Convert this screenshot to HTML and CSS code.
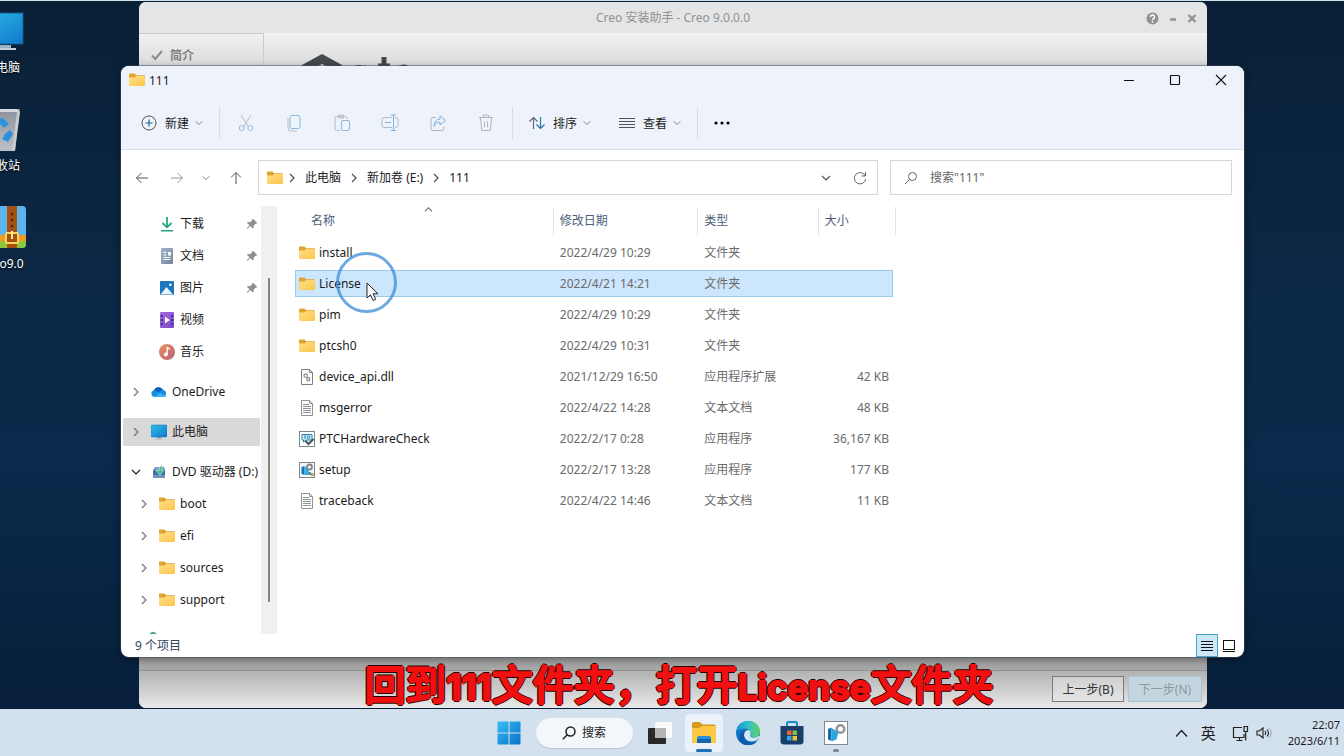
FILE: index.html
```html
<!DOCTYPE html>
<html lang="zh-CN">
<head>
<meta charset="utf-8">
<title>111</title>
<link rel="stylesheet" href="styles.css">
</head>
<body>
<svg class="defs" aria-hidden="true">
  <defs>
    <linearGradient id="gFolder" x1="0" y1="0" x2="1" y2="1"><stop offset="0" stop-color="#ffe08a"/><stop offset="1" stop-color="#fbc64a"/></linearGradient>
    <linearGradient id="gScreen" x1="0" y1="0" x2="1" y2="1"><stop offset="0" stop-color="#2cc0e8"/><stop offset="1" stop-color="#1277cc"/></linearGradient>
    <linearGradient id="gBlue" x1="0" y1="0" x2="1" y2="1"><stop offset="0" stop-color="#35bdf2"/><stop offset="1" stop-color="#0a72c8"/></linearGradient>
    <linearGradient id="gViolet" x1="0" y1="0" x2="1" y2="1"><stop offset="0" stop-color="#a06be0"/><stop offset="1" stop-color="#7a48c4"/></linearGradient>
    <linearGradient id="gMusic" x1="0" y1="0" x2="1" y2="1"><stop offset="0" stop-color="#e8925a"/><stop offset="1" stop-color="#b8607c"/></linearGradient>
    <linearGradient id="gDoc" x1="0" y1="0" x2="1" y2="1"><stop offset="0" stop-color="#a3b4c8"/><stop offset="1" stop-color="#71859e"/></linearGradient>
    <linearGradient id="gEdgeA" x1="0" y1="0" x2="1" y2="0"><stop offset="0" stop-color="#1c8fd6"/><stop offset=".5" stop-color="#2fc2c8"/><stop offset="1" stop-color="#63d060"/></linearGradient>
    <linearGradient id="gBin" x1="0" y1="0" x2="0" y2="1"><stop offset="0" stop-color="#8b929c"/><stop offset="1" stop-color="#bcc0c6"/></linearGradient>
  </defs>
  <symbol id="i-folder" viewBox="0 0 16 16"><path d="M0 2.500a1 1 0 0 1 1-1h4.500l1.800 1.800H15a1 1 0 0 1 1 1V8H0z" fill="#dfa52c"/><path d="M0 5.500h5.500L7.300 4H15a1 1 0 0 1 1 1V13a1 1 0 0 1-1 1H1a1 1 0 0 1-1-1z" fill="url(#gFolder)"/></symbol>
  <symbol id="i-right" viewBox="0 0 10 10"><path d="M3 1l4 4-4 4" fill="none" stroke="currentColor" stroke-width="1.300"/></symbol>
  <symbol id="i-down" viewBox="0 0 10 10"><path d="M1 3l4 4 4-4" fill="none" stroke="currentColor" stroke-width="1.200"/></symbol>
  <symbol id="i-up" viewBox="0 0 10 10"><path d="M1 7l4-4 4 4" fill="none" stroke="currentColor" stroke-width="1.200"/></symbol>
  <symbol id="i-pin" viewBox="0 0 12 12"><path d="M7 .8L11.200 5l-.9.8-.8-.1-1.900 2 .1 2-.9.9-2.500-2.500L1.200 11l-.6-.5 2.900-3.200L1 4.900l.9-.9 2.200.2L6.200 2.300l-.1-.7z" fill="#8b8f94"/></symbol>
  <symbol id="i-download" viewBox="0 0 16 16"><path d="M8 1v10M3.500 7L8 11.300 12.500 7" fill="none" stroke="#26a488" stroke-width="1.800"/><path d="M2 14.700h12" stroke="#26a488" stroke-width="1.600"/></symbol>
  <symbol id="i-doc" viewBox="0 0 16 16"><rect x="2" y="0" width="12" height="16" rx="1" fill="url(#gDoc)"/><path d="M4.500 4.500h3M4.500 7h3M4.500 9.500h7M4.500 11.500h7" stroke="#fff"/><path d="M9 4h3v3.500H9z" fill="#fff"/></symbol>
  <symbol id="i-picture" viewBox="0 0 16 16"><rect x="1" y="1" width="14" height="14" rx="1" fill="#1c76bd"/><path d="M1.500 14.500L7.500 7l6.500 7.500z" fill="#e9f4fc"/><circle cx="11.300" cy="4.700" r="1.300" fill="#fff"/></symbol>
  <symbol id="i-video" viewBox="0 0 16 16"><rect x="1" y="0" width="14" height="16" rx="1" fill="url(#gViolet)"/><path d="M2 3h2v2H2zM2 7h2v2H2zM2 11h2v2H2zM12 3h2v2h-2zM12 7h2v2h-2zM12 11h2v2h-2z" fill="#4d2a8c"/><path d="M6 4.800L11 8l-5 3.200z" fill="#fff"/></symbol>
  <symbol id="i-music" viewBox="0 0 16 16"><circle cx="8" cy="8" r="8" fill="url(#gMusic)"/><circle cx="6.800" cy="10.500" r="1.900" fill="#fff"/><path d="M8.200 10.500V3.500l2.600 1.800" fill="none" stroke="#fff" stroke-width="1.300"/></symbol>
  <symbol id="i-cloud" viewBox="0 0 16 16"><path d="M3.500 13A3.400 3.400 0 0 1 3 6.300 5 5 0 0 1 12 6a3.600 3.600 0 0 1 .6 7z" fill="#1490df"/><path d="M3 6.300A5 5 0 0 1 12 6c-2 0-3 1-4 2z" fill="#0a5eb5"/><path d="M3.500 13L9 9l6.200 3.200A3.400 3.400 0 0 1 12.600 13z" fill="#39b4f4"/></symbol>
  <symbol id="i-pc" viewBox="0 0 16 16"><path d="M6 12h4v2.500H6z" fill="#8fa3b3"/><path d="M4.500 14.500h7v1h-7z" fill="#a9bac7"/><rect x="0" y="1" width="16" height="12" rx="1" fill="url(#gScreen)" stroke="#1d6fa8" stroke-width=".5"/></symbol>
  <symbol id="i-dvd" viewBox="0 0 16 16"><path d="M2 6l2-3h9l1 3v8H2z" fill="#7b9cc4"/><path d="M2 6h12v8H2z" fill="#3f74ac"/><path d="M2 11h12v3H2z" fill="#7394b6"/><path d="M12 1c-3 .5-4 2.500-4 5.500H5L9 11l3.500-4.500H10.500C10.500 4 11 2.500 12 1z" fill="#3bc37b" stroke="#fff" stroke-width=".5"/></symbol>
  <symbol id="i-dll" viewBox="0 0 16 16"><path d="M2.500.5h8l3 3v12h-11z" fill="#fff" stroke="#7c7c7c"/><path d="M10.500.5v3h3" fill="none" stroke="#7c7c7c"/><circle cx="6.700" cy="6.700" r="1.700" fill="none" stroke="#999" stroke-width="1.400"/><circle cx="9.300" cy="10.200" r="1.500" fill="none" stroke="#888" stroke-width="1.300"/></symbol>
  <symbol id="i-text" viewBox="0 0 16 16"><path d="M2.500.5h8l3 3v12h-11z" fill="#fff" stroke="#939393"/><path d="M10.500.5v3h3M4 4.500h6M4 6.500h8M4 8.500h8M4 10.500h8M4 12.500h8" fill="none" stroke="#939393"/></symbol>
  <symbol id="i-check" viewBox="0 0 16 16"><rect x=".5" y=".5" width="15" height="15" fill="#fff" stroke="#7d8589"/><path d="M3 3.500h10v5.500H7L4.500 11V9H3z" fill="#d4effa" stroke="#2681a8"/><path d="M5 5h2M5 7h2" stroke="#2681a8"/><circle cx="9.500" cy="6.200" r="1.300" fill="none" stroke="#2681a8"/><path d="M6.500 10l3 3L14.500 8" fill="none" stroke="#41545e" stroke-width="2"/></symbol>
  <symbol id="i-setup" viewBox="0 0 16 16"><rect x=".5" y=".5" width="15" height="15" fill="#f6f9fa" stroke="#7d8589"/><path d="M2.500 5l3-1v9l-3-1z" fill="#1474b8"/><path d="M5.500 4l4.500 4-1 5H5.500z" fill="#31aee2"/><circle cx="10.500" cy="5" r="2.500" fill="#fff" stroke="#80878c" stroke-width="1.800"/><path d="M9 10h3v3H9z" fill="#5f8fae"/><path d="M12 11h2.500v3H12z" fill="#a9a544"/></symbol>
  <symbol id="i-task-setup" viewBox="0 0 24 24"><rect x=".5" y=".5" width="23" height="23" fill="#fff" stroke="#84898d"/><path d="M4 8l3.500-1.500V20L4 18.500z" fill="#0f6fb4"/><path d="M7.500 7l7 4-2 7.500-5 2z" fill="#2ea4dc"/><circle cx="16.500" cy="8" r="3.800" fill="#fff" stroke="#90969b" stroke-width="2.600"/></symbol>
</svg>

<main class="stage">
  <ul class="shortcuts">
    <li><svg class="big" viewBox="0 0 44 44"><path d="M13 36h18v3H13z" fill="#9bb0bd"/><path d="M8 39h28v2H8z" fill="#c3ced5"/><rect x="-10" y="4" width="53" height="31" fill="url(#gScreen)" stroke="#0e588c"/></svg><span>此电脑</span></li>
    <li><svg class="big" viewBox="0 0 44 44"><path d="M4 2h36l-5 42H9z" fill="url(#gBin)"/><path d="M4 2h33l3 3H4z" fill="#d5d8dc"/><path d="M37 5h3l-5 38-3 1z" fill="#c9ccd1"/><path d="M16 13l7-2 6 6-5 4-4-4-4 4zM30 23l3 4-5 8-6-3 3-5zM12 24l6 1-1 8-6-4z" fill="#2d92de"/></svg><span>回收站</span></li>
    <li><svg class="big archive" viewBox="0 0 48 44"><rect x="0" y="1" width="48" height="42" rx="4" fill="#5bb5f0"/><path d="M0 30h48v7H0z" fill="#f59a23"/><path d="M0 36h48v3a4 4 0 0 1-4 4H4z" fill="#8cc63f"/><rect x="29" y="1" width="10" height="42" fill="#a4500f"/><circle cx="34" cy="9" r="1.500" fill="#5e2b08"/><circle cx="34" cy="15" r="1.500" fill="#5e2b08"/><circle cx="34" cy="21" r="1.500" fill="#5e2b08"/><rect x="28" y="28" width="12" height="10" rx="1" fill="#a4500f" stroke="#ffd35c" stroke-width="2"/><path d="M34 26v8" stroke="#ffe9a0" stroke-width="2"/></svg><span>Creo9.0</span></li>
  </ul>

  <section class="installer">
    <header class="installer-bar">
      <h2>Creo 安装助手 - Creo 9.0.0.0</h2>
      <div class="installer-controls">
        <button aria-label="帮助"><svg width="13" height="13" viewBox="0 0 13 13"><circle cx="6.500" cy="6.500" r="6" fill="#929292"/><path d="M4.500 5a2 2 0 1 1 2.800 1.800q-.8.400-.8 1.400M6.500 9v1.600" fill="none" stroke="#fff" stroke-width="1.500"/></svg></button>
        <button aria-label="最小化"><svg width="8" height="13" viewBox="0 0 8 13"><path d="M1 7.500h6" stroke="#929292" stroke-width="2.400"/></svg></button>
        <button aria-label="关闭"><svg width="10" height="13" viewBox="0 0 10 13"><path d="M1.500 3l7 7M8.500 3l-7 7" stroke="#929292" stroke-width="2.400"/></svg></button>
      </div>
    </header>
    <div class="installer-body">
      <nav class="steps"><svg width="12" height="12" viewBox="0 0 12 12"><path d="M1 5.500L4.200 9 11 1" fill="none" stroke="#8a8a8a" stroke-width="2"/></svg><span>简介</span></nav>
      <div class="brand"><svg width="116" height="40" viewBox="0 0 116 40"><path d="M20 0l20 11v24L20 40 0 35V11z" fill="#45494c"/><path d="M20 10l9 5v12l-9 5-9-5V15z" fill="#e6e7e8"/><path d="M57 30V11M57 17a6 6 0 1 1 0 6" fill="none" stroke="#45494c" stroke-width="5"/><path d="M82 3v22q0 5 7 5M76 12h12M107 15a8 8 0 1 0 0 12" fill="none" stroke="#45494c" stroke-width="5"/></svg></div>
    </div>
    <footer class="installer-footer">
      <button class="step-button">上一步(B)</button>
      <button class="step-button primary" disabled>下一步(N)</button>
    </footer>
  </section>

  <section class="explorer">
    <header class="chrome">
      <div class="titlebar">
        <svg class="icon"><use href="#i-folder"/></svg><h1>111</h1>
        <div class="window-controls">
          <button aria-label="最小化"><svg width="12" height="12" viewBox="0 0 12 12"><path d="M1 6.500h10" stroke="#111"/></svg></button>
          <button aria-label="最大化"><svg width="12" height="12" viewBox="0 0 12 12"><rect x="1.500" y="1.500" width="9" height="9" rx="1" fill="none" stroke="#111" stroke-width="1.200"/></svg></button>
          <button aria-label="关闭"><svg width="12" height="12" viewBox="0 0 12 12"><path d="M1 1l10 10M11 1L1 11" stroke="#111" stroke-width="1.100"/></svg></button>
        </div>
      </div>
      <div class="commands">
        <button class="command new"><svg class="icon" viewBox="0 0 16 16"><circle cx="8" cy="8" r="7" fill="none" stroke="#4d4d4d"/><path d="M8 4.500v7M4.500 8h7" stroke="#1b6b94" stroke-width="1.200"/></svg><span>新建</span><svg class="tiny"><use href="#i-down"/></svg></button>
        <div class="tools">
          <button aria-label="剪切"><svg class="tool" viewBox="0 0 18 18"><path d="M4 1l7.500 12M14 1L6.500 13" stroke="#b6bcc3"/><circle cx="4.700" cy="14" r="2.500" stroke="#8ebce0"/><circle cx="13.300" cy="14" r="2.500" stroke="#8ebce0"/></svg></button>
          <button aria-label="复制"><svg class="tool" viewBox="0 0 18 18"><rect x="5" y="1.500" width="10" height="13" rx="2" stroke="#8db6db"/><path d="M3 4v10q0 3 3 3h6" stroke="#b6bcc3"/></svg></button>
          <button aria-label="粘贴"><svg class="tool" viewBox="0 0 18 18"><path d="M7 16.500H3.500q-1.500 0-1.500-1.500V4q0-1.500 1.500-1.500h9Q14 2.500 14 4v1M5.500 1h5v3h-5z" stroke="#b6bcc3"/><rect x="8.500" y="6.500" width="8" height="10" rx="1.500" stroke="#8db6db"/></svg></button>
          <button aria-label="重命名"><svg class="tool" viewBox="0 0 18 18"><path d="M11 3.500H3Q1 3.500 1 5.500v6q0 2 2 2h8M14 3.500q3 0 3 2v6q0 2-3 2" stroke="#aebdca"/><path d="M4 8.500h6M10 1h5M10 16.500h5M12.500 1v15.500" stroke="#7db1df"/></svg></button>
          <button aria-label="共享"><svg class="tool" viewBox="0 0 18 18"><path d="M7 3.500H4Q2 3.500 2 5.500v9q0 2 2 2h9q2 0 2-2v-2" stroke="#aab4be"/><path d="M11 1.800L16.500 6.500 11 11V8q-4.500 0-6 4.500Q5.500 5 11 5z" stroke="#7db1df"/></svg></button>
          <button aria-label="删除"><svg class="tool" viewBox="0 0 18 18"><path d="M2 3.500h14M6.500 3V1h5v2M3.500 4l1.200 12.500h8.600L14.500 4M7.500 7.500v6M10.500 7.500v6" stroke="#b2b5b9"/></svg></button>
        </div>
        <button class="command sort"><svg class="icon" viewBox="0 0 16 16" fill="none"><path d="M4.500 14V2.500M.5 6.500l4-4 4 4" stroke="#606770" stroke-width="1.200"/><path d="M11.500 2v11.500M7.500 9.500l4 4 4-4" stroke="#2675aa" stroke-width="1.200"/></svg><span>排序</span><svg class="tiny"><use href="#i-down"/></svg></button>
        <button class="command view"><svg class="icon" viewBox="0 0 16 16"><path d="M0 3.500h16M0 6.500h16M0 9.500h16M0 12.500h16" stroke="#4e5358"/></svg><span>查看</span><svg class="tiny"><use href="#i-down"/></svg></button>
        <button class="command more" aria-label="更多"><svg class="icon" viewBox="0 0 16 16"><circle cx="2" cy="8" r="1.600"/><circle cx="8" cy="8" r="1.600"/><circle cx="14" cy="8" r="1.600"/></svg></button>
      </div>
    </header>

    <div class="location">
      <div class="history">
        <button aria-label="后退"><svg class="arrow" viewBox="0 0 14 14"><path d="M13 7H1.500M6.500 2l-5 5 5 5" stroke="#555"/></svg></button>
        <button aria-label="前进"><svg class="arrow" viewBox="0 0 14 14"><path d="M1 7h11.500M7.500 2l5 5-5 5" stroke="#999"/></svg></button>
        <button class="recent" aria-label="最近位置"><svg class="tiny"><use href="#i-down"/></svg></button>
        <button aria-label="上移"><svg class="arrow" viewBox="0 0 14 14"><path d="M7 13V1.500M2 6.500l5-5 5 5" stroke="#555"/></svg></button>
      </div>
      <div class="address">
        <svg class="icon"><use href="#i-folder"/></svg>
        <svg class="sep"><use href="#i-right"/></svg><button>此电脑</button>
        <svg class="sep"><use href="#i-right"/></svg><button>新加卷 (E:)</button>
        <svg class="sep"><use href="#i-right"/></svg><button>111</button>
        <div class="address-end">
          <button aria-label="展开"><svg class="sep"><use href="#i-down"/></svg></button>
          <button aria-label="刷新"><svg class="arrow" viewBox="0 0 14 14"><path d="M12.300 5A5.700 5.700 0 1 0 12.700 8M12.500 1v4h-4" stroke="#666"/></svg></button>
        </div>
      </div>
      <label class="search"><svg class="arrow" viewBox="0 0 14 14"><circle cx="8.500" cy="5.500" r="4" stroke="#666"/><path d="M5.500 8.500L1 13" stroke="#666"/></svg><input type="text" aria-label="搜索" placeholder='搜索"111"'></label>
    </div>

    <div class="panes">
      <nav class="tree">
        <ul class="group quick">
          <li><svg class="icon"><use href="#i-download"/></svg><span>下载</span><svg class="pin"><use href="#i-pin"/></svg></li>
          <li><svg class="icon"><use href="#i-doc"/></svg><span>文档</span><svg class="pin"><use href="#i-pin"/></svg></li>
          <li><svg class="icon"><use href="#i-picture"/></svg><span>图片</span><svg class="pin"><use href="#i-pin"/></svg></li>
          <li><svg class="icon"><use href="#i-video"/></svg><span>视频</span></li>
          <li><svg class="icon"><use href="#i-music"/></svg><span>音乐</span></li>
        </ul>
        <ul class="group"><li><svg class="twist"><use href="#i-right"/></svg><svg class="icon"><use href="#i-cloud"/></svg><span>OneDrive</span></li></ul>
        <ul class="group"><li class="current"><svg class="twist"><use href="#i-right"/></svg><svg class="icon"><use href="#i-pc"/></svg><span>此电脑</span></li></ul>
        <ul class="group"><li><svg class="twist open"><use href="#i-down"/></svg><svg class="icon"><use href="#i-dvd"/></svg><span>DVD 驱动器 (D:)</span></li>
          <li class="child"><svg class="twist"><use href="#i-right"/></svg><svg class="icon"><use href="#i-folder"/></svg><span>boot</span></li>
          <li class="child"><svg class="twist"><use href="#i-right"/></svg><svg class="icon"><use href="#i-folder"/></svg><span>efi</span></li>
          <li class="child"><svg class="twist"><use href="#i-right"/></svg><svg class="icon"><use href="#i-folder"/></svg><span>sources</span></li>
          <li class="child"><svg class="twist"><use href="#i-right"/></svg><svg class="icon"><use href="#i-folder"/></svg><span>support</span></li>
        </ul>
        <ul class="group"><li class="network"><svg class="icon" viewBox="0 0 16 16"><path d="M2 11a4 4 0 0 1 8-2z" fill="#4ba596"/></svg></li></ul>
      </nav>
      <div class="scrollbar"><div class="thumb"></div></div>
      <div class="files">
        <table>
          <colgroup><col class="c-name"><col class="c-date"><col class="c-type"><col class="c-size"></colgroup>
          <thead><tr><th>名称<svg class="sorted"><use href="#i-up"/></svg></th><th>修改日期</th><th>类型</th><th>大小</th></tr></thead>
          <tbody>
            <tr><td><div class="file"><svg class="icon"><use href="#i-folder"/></svg>install</div></td><td>2022/4/29 10:29</td><td>文件夹</td><td></td></tr>
            <tr class="selected"><td><div class="file"><svg class="icon"><use href="#i-folder"/></svg>License</div></td><td>2022/4/21 14:21</td><td>文件夹</td><td></td></tr>
            <tr><td><div class="file"><svg class="icon"><use href="#i-folder"/></svg>pim</div></td><td>2022/4/29 10:29</td><td>文件夹</td><td></td></tr>
            <tr><td><div class="file"><svg class="icon"><use href="#i-folder"/></svg>ptcsh0</div></td><td>2022/4/29 10:31</td><td>文件夹</td><td></td></tr>
            <tr><td><div class="file"><svg class="icon"><use href="#i-dll"/></svg>device_api.dll</div></td><td>2021/12/29 16:50</td><td>应用程序扩展</td><td>42 KB</td></tr>
            <tr><td><div class="file"><svg class="icon"><use href="#i-text"/></svg>msgerror</div></td><td>2022/4/22 14:28</td><td>文本文档</td><td>48 KB</td></tr>
            <tr><td><div class="file"><svg class="icon"><use href="#i-check"/></svg>PTCHardwareCheck</div></td><td>2022/2/17 0:28</td><td>应用程序</td><td>36,167 KB</td></tr>
            <tr><td><div class="file"><svg class="icon"><use href="#i-setup"/></svg>setup</div></td><td>2022/2/17 13:28</td><td>应用程序</td><td>177 KB</td></tr>
            <tr><td><div class="file"><svg class="icon"><use href="#i-text"/></svg>traceback</div></td><td>2022/4/22 14:46</td><td>文本文档</td><td>11 KB</td></tr>
          </tbody>
        </table>
      </div>
    </div>

    <footer class="status">
      <span>9 个项目</span>
      <div class="modes">
        <button class="active" aria-label="详细信息"><svg width="12" height="12" viewBox="0 0 12 12"><path d="M0 1.500h12M0 4.500h12M0 7.500h12M0 10.500h12" stroke="#111"/></svg></button>
        <button aria-label="大图标"><svg width="12" height="12" viewBox="0 0 12 12"><rect x=".5" y=".5" width="11" height="9" fill="none" stroke="#111"/><path d="M0 11.500h12" stroke="#111"/></svg></button>
      </div>
    </footer>
  </section>

  <div class="click-ring"></div>
  <svg class="pointer" width="14" height="20" viewBox="0 0 14 20"><path d="M1 1v15l3.500-3.200 2.600 5.700 2.600-1.200-2.600-5.500H12z" fill="#fff" stroke="#222"/></svg>
  <p class="caption">回到<b>111</b>文件夹，打开<b>License</b>文件夹</p>
</main>

<footer class="taskbar">
  <div class="apps">
    <button aria-label="开始"><svg width="24" height="24" viewBox="0 0 24 24" fill="url(#gBlue)"><path d="M1 .5h10.500v11H.5V1zM12.500.5H23l.5.5v10.500h-11zM.5 12.500h11v11H1l-.5-.5zM12.500 12.500h11V23l-.5.500H12.500z"/></svg></button>
    <button class="task-search"><svg width="14" height="14" viewBox="0 0 14 14" fill="none" stroke="#222" stroke-width="1.500"><circle cx="8.500" cy="5.500" r="4.500"/><path d="M5.300 8.700L.8 13.200"/></svg><span>搜索</span></button>
    <button aria-label="任务视图"><svg width="24" height="24" viewBox="0 0 24 24"><rect x="0" y="7" width="18" height="16" rx="1" fill="#292929"/><rect x="7" y="1" width="17" height="16" rx="1" fill="#f8fafc"/><path d="M7 7h11v10H7z" fill="#b4b6b8"/></svg></button>
    <button class="active" aria-label="文件资源管理器"><svg width="24" height="24" viewBox="0 0 24 24"><path d="M0 3q0-2 2-2h6l2.500 2.500H22q2 0 2 2V9H0z" fill="#d99a1c"/><path d="M0 7h7l3-2h14v17H0z" fill="#fdc944"/><path d="M5 22v-4q0-3 3-3h8q3 0 3 3v4z" fill="#1267b4"/><path d="M5 18q0-3 3-3h8q3 0 3 3z" fill="#2d8ed8"/></svg></button>
    <button aria-label="Edge"><svg width="24" height="24" viewBox="0 0 24 24"><circle cx="12" cy="12" r="12" fill="#1275c4"/><path d="M.2 11C1 4.500 6 0 12 0c7 0 12 5 12 10.500 0 4-3 6-6.500 6-3 0-4-1.200-3.500-2.500 1.500-3-.5-6.500-5-6.500C4.500 7.500 1.500 9 .2 11z" fill="url(#gEdgeA)"/><path d="M8 14c0-3.500 2-5.500 4.500-5 2 .5 2.500 3 1.500 5-.5 1.500 1 2.700 3.500 2.700 2.300 0 4-.7 5-1.900l1.500.5q-1.500 3-4 4.300C14 22 8 19 8 14z" fill="#d4e6f1"/><path d="M8 14c0 5 4 7.500 9.500 7.500l3-.5A12 12 0 0 1 3 20C2 13 7 8 12 9c-2.500.5-4 2-4 5z" fill="#0d5dae"/></svg></button>
    <button aria-label="Microsoft Store"><svg width="24" height="24" viewBox="0 0 24 24"><path d="M7 6V2.500Q7 1 8.500 1h7Q17 1 17 2.500V6" fill="none" stroke="#1487cd" stroke-width="2"/><path d="M0.500 5h23v15q0 3.500-3.500 3.500H4Q.5 23.500.5 20z" fill="#183e6c"/><path d="M7 9.500h4.500V14H7z" fill="#ed5e3d"/><path d="M12.500 9.500H17V14h-4.500z" fill="#83bc3e"/><path d="M7 15h4.500v4.500H7z" fill="#30a8e0"/><path d="M12.500 15H17v4.500h-4.500z" fill="#f5be35"/></svg></button>
    <button class="running" aria-label="Creo 安装助手"><svg width="24" height="24"><use href="#i-task-setup"/></svg></button>
  </div>
  <div class="tray">
    <svg class="tray-up" width="13" height="13" viewBox="0 0 13 13" fill="none" stroke="#222" stroke-width="1.300"><path d="M1 9.500l5.500-6 5.500 6"/></svg>
    <span class="ime">英</span>
    <svg width="17" height="17" viewBox="0 0 17 17" fill="none" stroke="#222" stroke-width="1.200"><path d="M10 2.500H1.500v10H12V9M4.500 15.500h6M7.500 12.500v3M12 1.500h3.500v5H12zM13.700 6.500v9"/></svg>
    <svg width="16" height="16" viewBox="0 0 16 16" fill="none" stroke="#222" stroke-width="1.100"><path d="M1 6h2.500L7 3v10L3.500 10H1zM9 6q1.500 2 0 4M11 4.500q3 3.500 0 7"/><path d="M13 3q4.500 5 0 10" stroke="#a7afb8"/></svg>
    <div class="clock"><span>22:07</span><span>2023/6/11</span></div>
  </div>
</footer>
</body>
</html>
```
FILE: styles.css
```css
* { box-sizing: border-box; }

body {
  margin: 0;
  height: 100vh;
  display: flex;
  flex-direction: column;
  overflow: hidden;
  font: 12px/16px "Noto Sans", "Noto Sans CJK SC", sans-serif;
  color: #1b1b1b;
}

h1, h2, p, ul { margin: 0; padding: 0; font: inherit; }
ul { list-style: none; }
svg { display: block; flex: none; }

button {
  display: flex;
  align-items: center;
  justify-content: center;
  padding: 0;
  border: 0;
  background: none;
  color: inherit;
  font: inherit;
  white-space: nowrap;
}

.defs { position: absolute; width: 0; height: 0; }
.icon { width: 16px; height: 16px; }
.tiny { width: 8px; height: 8px; color: #777; }
.sep { width: 10px; height: 10px; color: #555; }
.arrow { width: 14px; height: 14px; fill: none; }

.stage {
  position: relative;
  flex: 1;
  border-top: 1px solid #cfe3ec;
  background: linear-gradient(180deg, #0a2036 0, #0b2744 35%, #0a2a4b 65%, #071f3a 100%);
}

/* Desktop shortcuts */
.shortcuts {
  position: absolute;
  top: 8px;
  left: -40px;
  width: 84px;
  display: flex;
  flex-direction: column;
  gap: 31px;
  color: #fff;
  text-shadow: 0 1px 2px #000;
}
.shortcuts li { display: flex; flex-direction: column; align-items: center; gap: 7px; }
.big { width: 44px; height: 44px; }
.big.archive { width: 48px; }

/* Installer window */
.installer {
  position: absolute;
  top: 1px;
  left: 139px;
  right: 137px;
  bottom: 1px;
  display: flex;
  flex-direction: column;
  border-radius: 7px;
  overflow: hidden;
  background: #e6e7e8;
}
.installer-bar {
  display: grid;
  grid-template-columns: 1fr auto 1fr;
  align-items: center;
  height: 31px;
  padding-top: 1px;
  background: #e4e5e6;
  color: #929292;
}
.installer-bar h2 { grid-column: 2; }
.installer-controls { display: flex; justify-content: flex-end; gap: 10px; padding-right: 10px; }
.installer-body {
  flex: 1;
  display: flex;
  align-items: flex-start;
  background: linear-gradient(180deg, #f1f1f2 0, #d9d9da 36px);
}
.steps {
  display: flex;
  align-items: center;
  gap: 7px;
  width: 125px;
  height: 46px;
  padding-left: 12px;
  border: 1px solid #c9cacb;
  border-left: 0;
  color: #7f7f7f;
  font-weight: 700;
}
.brand { padding: 21px 0 0 38px; }
.installer-footer {
  display: flex;
  align-items: flex-end;
  justify-content: flex-end;
  gap: 4px;
  height: 52px;
  padding: 0 5px 6px;
  background: linear-gradient(180deg, #9c9c9c 0, #a8a8a8 14px, #929292 14px, #929292 15px, #b2b2b2 15px, #e9e9e9 100%);
}
.step-button {
  height: 26px;
  width: 72px;
  padding-top: 1px;
  border: 1px solid #7d7d7d;
  background: rgba(240, 240, 240, 0.4);
  color: #333;
}
.step-button.primary { width: 74px; border-color: #a9c4d2; background: #c3d5df; color: #8c9aa2; }

/* Explorer window */
.explorer {
  position: absolute;
  top: 65px;
  left: 121px;
  right: 100px;
  bottom: 52px;
  display: flex;
  flex-direction: column;
  border-radius: 8px;
  overflow: hidden;
  background: #fff;
  box-shadow: 0 0 0 1px rgba(70, 80, 95, 0.5), 0 2px 8px rgba(0, 0, 0, 0.4);
}
.chrome { background: #eef3fb; border-bottom: 1px solid #dadde2; }
.titlebar { display: flex; align-items: center; gap: 4px; height: 28px; padding-left: 8px; }
.titlebar h1 { padding-top: 2px; }
.window-controls { display: flex; margin-left: auto; }
.window-controls button { width: 46px; height: 28px; }

.commands { display: flex; align-items: center; height: 55px; padding: 4px 0 2px; }
.command { height: 32px; gap: 8px; }
.command span { padding-top: 2px; }
.command .tiny { margin-left: -2px; }
.new { padding: 0 16px 0 20px; }
.tools { display: flex; padding: 0 2px; border: 1px solid #d9dee6; border-width: 0 1px; }
.tools button { width: 48px; height: 32px; }
.tool { width: 18px; height: 18px; fill: none; }
.sort { padding: 0 14px 0 16px; }
.view { padding: 0 16px 0 14px; }
.more { padding: 0 16px; border-left: 1px solid #d9dee6; }

.location { display: flex; align-items: center; padding: 10px 12px 11px 0; }
.history { display: flex; align-items: center; width: 137px; padding-left: 3px; }
.history button { width: 35px; height: 32px; }
.history .recent { width: 24px; }
.address {
  display: flex;
  align-items: center;
  gap: 8px;
  flex: 1;
  height: 35px;
  padding: 0 0 0 8px;
  border: 1px solid #d6d6d6;
}
.address > .icon { margin-right: -4px; }
.address-end { display: flex; margin-left: auto; }
.address-end button { width: 34px; height: 32px; }
.search {
  display: flex;
  align-items: center;
  gap: 12px;
  width: 342px;
  height: 35px;
  margin-left: 12px;
  padding: 0 13px;
  border: 1px solid #d6d6d6;
}
.search input {
  flex: 1;
  min-width: 0;
  padding: 0;
  border: 0;
  outline: 0;
  background: none;
  font: inherit;
}
.search input::placeholder { color: #666; }

.panes { flex: 1; display: flex; min-height: 0; }
.tree { width: 140px; padding: 4px 1px 0 2px; overflow: hidden; }
.group { padding-bottom: 8px; }
.tree li {
  display: flex;
  align-items: center;
  height: 28px;
  margin: 0 0 4px;
  padding-left: 8px;
  gap: 5px;
  white-space: nowrap;
}
.tree .quick li { padding-left: 36px; }
.tree .child { padding-left: 16px; }
.tree .network { padding-left: 24px; align-items: flex-start; }
.current { background: #d9d9d9; }
.twist { width: 10px; height: 10px; margin-right: 5px; color: #777; }
.twist.open { color: #222; }
.pin { width: 12px; height: 12px; margin-left: auto; margin-right: 2px; }
.scrollbar { width: 16px; padding: 72px 0 32px 7px; background: #f0f0f0; }
.thumb { width: 2px; height: 100%; background: #858585; }

.files { flex: 1; padding-left: 18px; min-width: 0; }
table { width: 598px; table-layout: fixed; border-collapse: separate; border-spacing: 0 4px; margin-top: -3px; }
.c-name { width: 258px; }
.c-date { width: 144px; }
.c-type { width: 120px; }
.c-size { width: 74px; }
th {
  position: relative;
  height: 28px;
  padding: 0 6px;
  border-right: 1px solid #e3e3e3;
  color: #4c607a;
  font-weight: 400;
  text-align: left;
}
th:first-child { padding-left: 16px; }
th:last-child { border-right-color: transparent; }
th:last-child::after {
  content: "";
  position: absolute;
  top: 0;
  bottom: 0;
  right: -4px;
  border-right: 1px solid #e3e3e3;
}
.sorted { position: absolute; top: -2px; left: 129px; width: 9px; height: 9px; color: #666; }
td {
  height: 27px;
  padding: 0 6px;
  border: 1px solid transparent;
  border-width: 1px 0;
  color: #6b6b6b;
}
td:first-child { padding-left: 4px; color: #1b1b1b; }
td:last-child { padding-right: 4px; text-align: right; }
.file { display: flex; align-items: center; gap: 4px; }
.selected td { background: #cce6fd; border-color: #99cbef; }
.selected td:first-child { border-left-width: 1px; padding-left: 3px; }
.selected td:last-child { border-right-width: 1px; }

.status { display: flex; align-items: center; height: 23px; padding: 0 4px 0 14px; color: #30425a; }
.modes { display: flex; margin-left: auto; }
.modes button { width: 22px; height: 23px; }
.modes .active { border: 1px solid #4aa3c9; background: #cce8f6; }

/* Click highlight, pointer and subtitle */
.click-ring {
  position: absolute;
  top: 251px;
  left: 336px;
  width: 61px;
  height: 61px;
  border: 3px solid rgba(60, 140, 215, 0.75);
  border-radius: 50%;
}
.pointer { position: absolute; top: 281px; left: 366px; }
.caption {
  position: absolute;
  left: 0;
  right: 0;
  bottom: -4px;
  padding-left: 14px;
  text-align: center;
  white-space: nowrap;
  font: 500 41px/52px "Noto Sans CJK SC", sans-serif;
  color: #f01010;
  -webkit-text-stroke: 2px #f01010;
  stroke-linejoin: round;
  text-shadow: 2px 0 #2a0000, -2px 0 #2a0000, 0 2px #2a0000, 0 -2px #2a0000, 1px 1px #2a0000, -1px 1px #2a0000, 1px -1px #2a0000, -1px -1px #2a0000;
}
.caption b { font: 700 35px/52px Inter, sans-serif; }

/* Taskbar */
.taskbar {
  display: grid;
  grid-template-columns: 1fr auto 1fr;
  align-items: center;
  height: 47px;
  padding-top: 1px;
  background: #d3e0ee;
}
.apps { grid-column: 2; display: flex; align-items: center; gap: 6px; }
.apps button { position: relative; width: 38px; height: 38px; border-radius: 4px; }
.apps .task-search {
  gap: 6px;
  width: 97px;
  height: 30px;
  margin: 0 2px;
  border-radius: 15px;
  background: #f3f7fc;
  box-shadow: 0 1px 1px #b9c6d3;
}
.apps .active { background: #eaf1f8; }
.apps .active::after, .running::after {
  content: "";
  position: absolute;
  bottom: 0;
  left: 11px;
  right: 11px;
  height: 3px;
  border-radius: 2px;
  background: #1a70ba;
}
.apps .running::after { left: 16px; right: 16px; background: #7c8791; }
.tray { display: flex; align-items: center; justify-content: flex-end; padding-right: 4px; }
.tray-up { margin-right: 13px; }
.ime { margin-right: 16px; font-size: 15px; }
.tray svg + svg { margin-left: 7px; }
.clock { display: flex; flex-direction: column; margin-left: 16px; text-align: right; font-size: 11px; }
```
